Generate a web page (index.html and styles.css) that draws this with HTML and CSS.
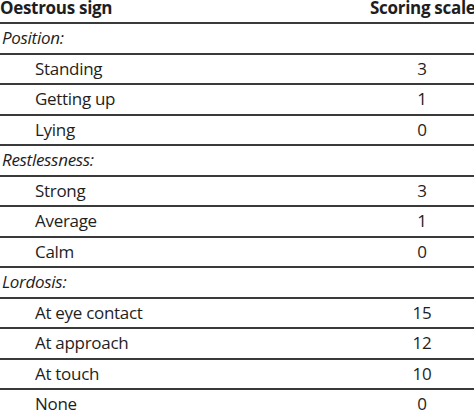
FILE: index.html
```html
<!DOCTYPE html>
<html lang="en">
<head>
<meta charset="utf-8">
<title>Oestrous sign scoring</title>
<link rel="stylesheet" href="styles.css">
</head>
<body>
<div class="scoring">
  <div class="row head"><div class="c1">Oestrous sign</div><div class="c2">Scoring scale</div></div>
  <div class="row section"><div class="c1">Position:</div><div class="c2"></div></div>
  <div class="row item"><div class="c1">Standing</div><div class="c2">3</div></div>
  <div class="row item"><div class="c1">Getting up</div><div class="c2">1</div></div>
  <div class="row item"><div class="c1">Lying</div><div class="c2">0</div></div>
  <div class="row section"><div class="c1">Restlessness:</div><div class="c2"></div></div>
  <div class="row item"><div class="c1">Strong</div><div class="c2">3</div></div>
  <div class="row item"><div class="c1">Average</div><div class="c2">1</div></div>
  <div class="row item"><div class="c1">Calm</div><div class="c2">0</div></div>
  <div class="row section"><div class="c1">Lordosis:</div><div class="c2"></div></div>
  <div class="row item"><div class="c1">At eye contact</div><div class="c2">15</div></div>
  <div class="row item"><div class="c1">At approach</div><div class="c2">12</div></div>
  <div class="row item"><div class="c1">At touch</div><div class="c2">10</div></div>
  <div class="row item"><div class="c1">None</div><div class="c2">0</div></div>
</div>
</body>
</html>
```
FILE: styles.css
```css
html, body {
  margin: 0;
  padding: 0;
  background: #ffffff;
  overflow: hidden;
}
body {
  font-family: "Open Sans", "Noto Sans", sans-serif;
  font-size: 17px;
  letter-spacing: -0.3px;
  color: #1e1e1e;
}
.scoring {
  width: 480px;
}
.row {
  display: grid;
  grid-template-columns: 370px 110px;
  align-items: center;
  height: 30.5px;
  box-sizing: border-box;
  border-bottom: 2px solid #3a3a3a;
  line-height: 16px;
}
.row .c2 {
  text-align: center;
  padding-right: 6px;
}
.head {
  height: 24px;
  align-items: start;
  font-weight: 700;
}
.head .c2 {
  text-align: left;
  padding-right: 0;
}
.section .c1 {
  font-style: italic;
  padding-left: 2px;
}
.item .c1 {
  padding-left: 35px;
}
```
